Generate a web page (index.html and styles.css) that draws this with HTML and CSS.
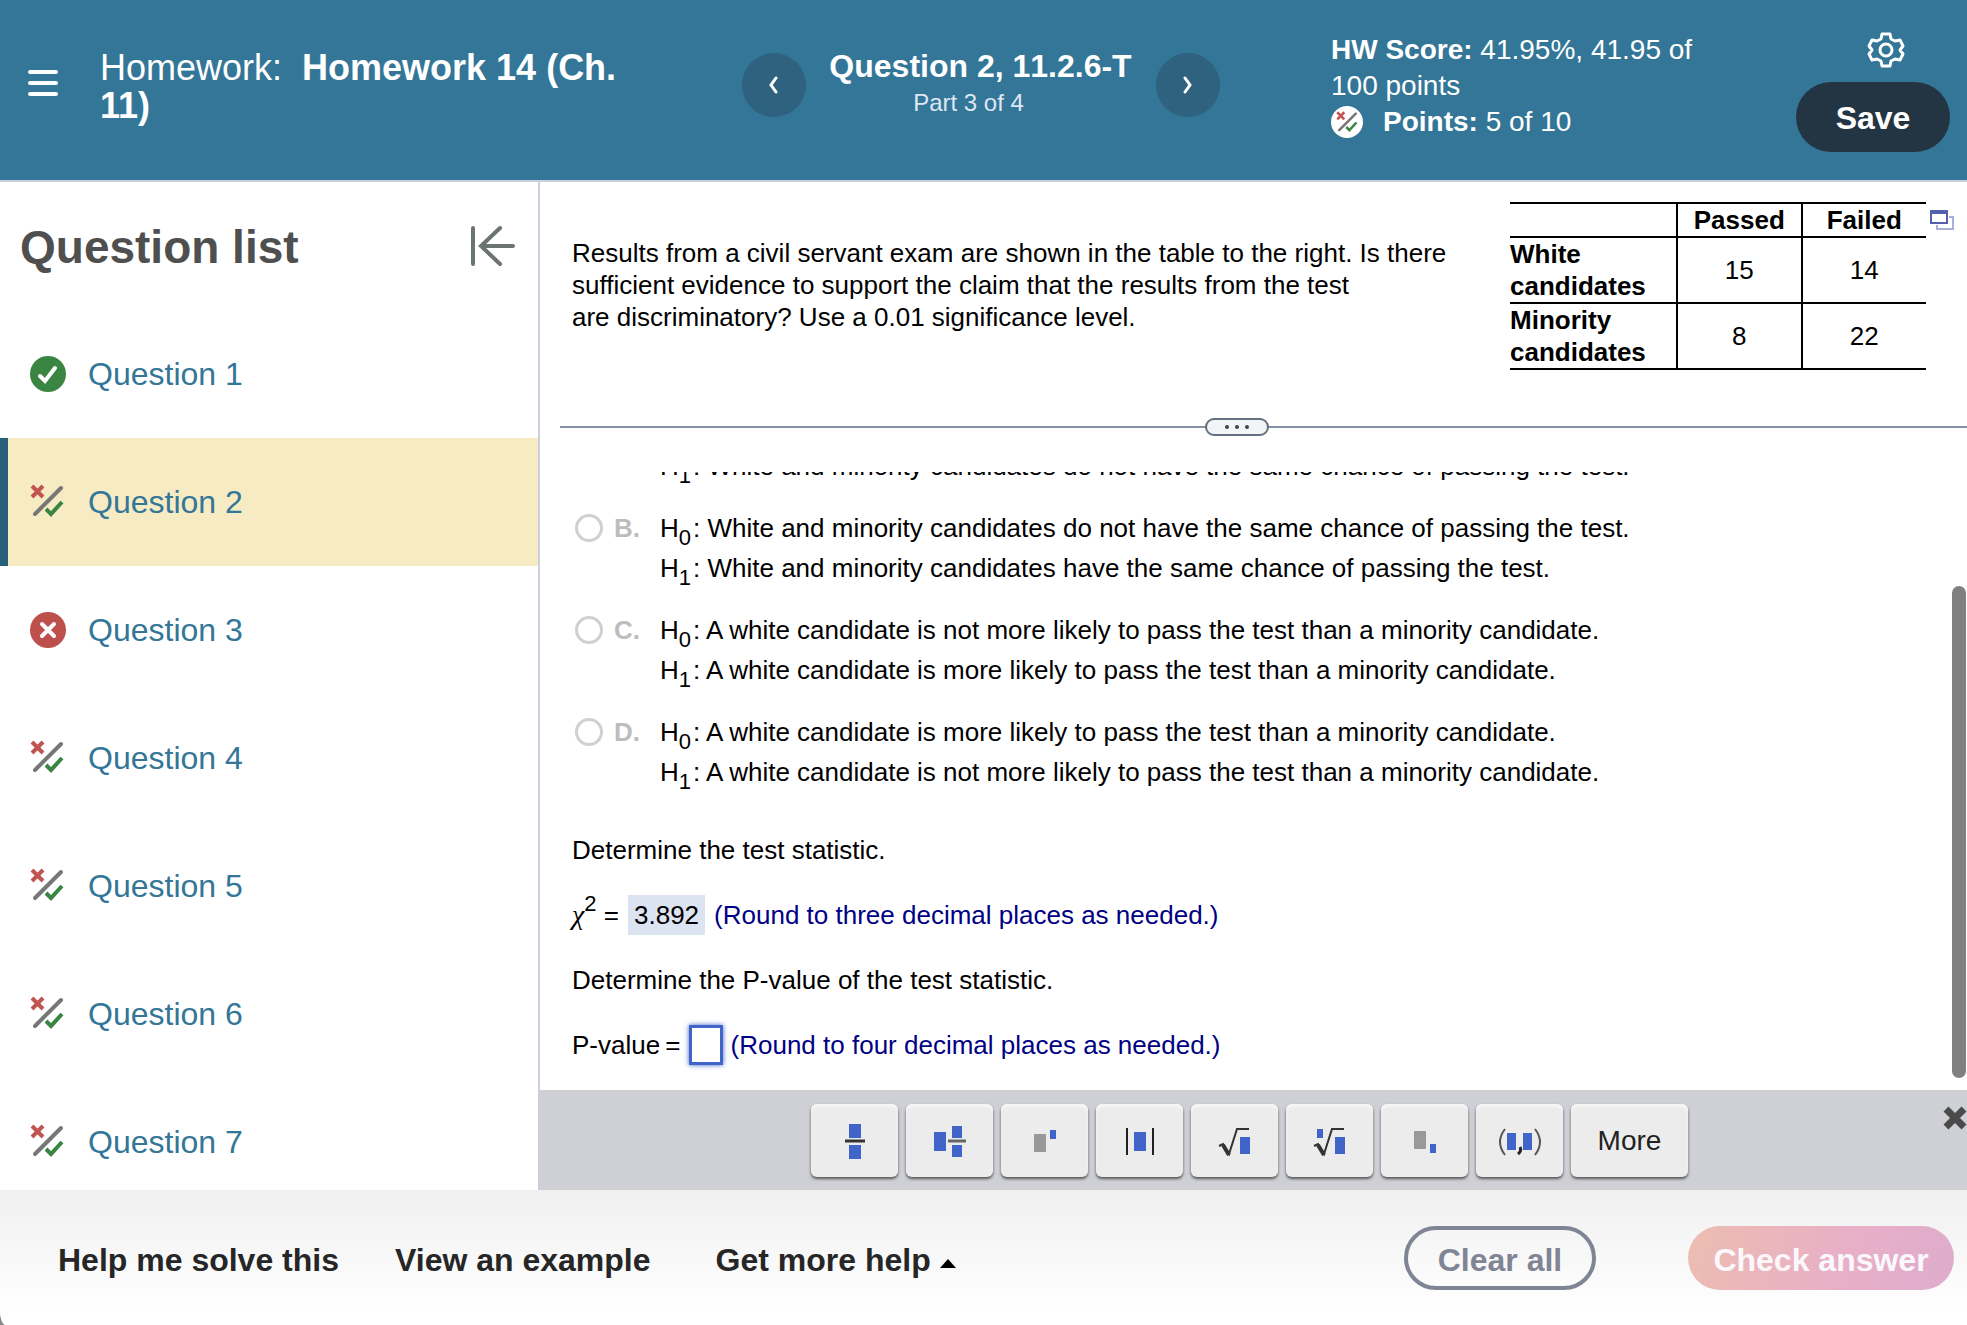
FILE: index.html
```html
<!DOCTYPE html>
<html lang="en">
<head>
<meta charset="utf-8">
<title>Homework 14 (Ch. 11) - Question 2</title>
<link rel="stylesheet" href="styles.css">
</head>
<body>
<svg class="defs" width="0" height="0" aria-hidden="true">
  <symbol id="partial" viewBox="0 0 36 36">
    <path d="M2 2l11 11M13 2L2 13" stroke="#c25450" stroke-width="4"/>
    <path d="M31 4L5 30" stroke="#777" stroke-width="4" stroke-linecap="round"/>
    <path d="M16 25l5 5L32 18" fill="none" stroke="#3b8542" stroke-width="4"/>
  </symbol>
</svg>
<div class="app">
  <header class="topbar">
    <button class="menu" aria-label="Menu"><svg width="30" height="28" viewBox="0 0 30 28"><path d="M2 3h26M2 14h26M2 25h26" stroke="#fff" stroke-width="4" stroke-linecap="round"/></svg></button>
    <h1 class="title"><span class="kind">Homework:&nbsp; </span>Homework 14 (Ch. 11)</h1>
    <nav class="pager" aria-label="Question navigation">
      <button class="round" aria-label="Previous question"><svg width="12" height="18" viewBox="0 0 12 18"><path d="M8 2L3 9l5 7" fill="none" stroke="#fff" stroke-width="3" stroke-linecap="round"/></svg></button>
      <div class="current">
        <h2 class="qname">Question 2, 11.2.6-T</h2>
        <p class="part">Part 3 of 4</p>
      </div>
      <button class="round" aria-label="Next question"><svg width="12" height="18" viewBox="0 0 12 18"><path d="M3 2l5 7-5 7" fill="none" stroke="#fff" stroke-width="3" stroke-linecap="round"/></svg></button>
    </nav>
    <div class="score">
      <p><b>HW Score:</b> 41.95%, 41.95 of 100 points</p>
      <p class="points"><span class="badge"><svg width="23" height="23"><use href="#partial"/></svg></span><span><b>Points:</b> 5 of 10</span></p>
    </div>
    <div class="actions">
      <button class="gear" aria-label="Settings"><svg width="38" height="38" viewBox="0 0 38 38" fill="none" stroke="#fff" stroke-width="3" stroke-linejoin="round"><path d="M15 3h8l1 5 4 2 5-1 3 6-3 4 3 4-3 6-5-1-4 2-1 5h-8l-1-5-4-2-5 1-3-6 3-4-3-4 3-6 5 1 4-2z"/><circle cx="19" cy="19" r="6"/></svg></button>
      <button class="save">Save</button>
    </div>
  </header>

  <div class="body">
    <aside class="sidebar">
      <div class="side-head">
        <h2>Question list</h2>
        <button class="collapse" aria-label="Collapse list"><svg width="46" height="42" viewBox="0 0 46 42" fill="none" stroke="#6c7373" stroke-width="4" stroke-linecap="round"><path d="M3 3v36M43 21H11M30 3L11 21l19 18"/></svg></button>
      </div>
      <ul class="questions">
        <li><a href="#q1"><svg class="mark" viewBox="0 0 36 36"><circle cx="18" cy="18" r="18" fill="#3b8542"/><path d="M10 20l5 5L25 12" fill="none" stroke="#fff" stroke-width="4" stroke-linecap="round"/></svg>Question 1</a></li>
        <li class="active"><a href="#q2"><svg class="mark"><use href="#partial"/></svg>Question 2</a></li>
        <li><a href="#q3"><svg class="mark" viewBox="0 0 36 36"><circle cx="18" cy="18" r="18" fill="#bd504c"/><path d="M12 12l12 12M24 12L12 24" stroke="#fff" stroke-width="4" stroke-linecap="round"/></svg>Question 3</a></li>
        <li><a href="#q4"><svg class="mark"><use href="#partial"/></svg>Question 4</a></li>
        <li><a href="#q5"><svg class="mark"><use href="#partial"/></svg>Question 5</a></li>
        <li><a href="#q6"><svg class="mark"><use href="#partial"/></svg>Question 6</a></li>
        <li><a href="#q7"><svg class="mark"><use href="#partial"/></svg>Question 7</a></li>
      </ul>
    </aside>

    <main class="main">
      <section class="prompt">
        <p class="stem">Results from a civil servant exam are shown in the table to the right. Is there<br>sufficient evidence to support the claim that the results from the test<br>are discriminatory? Use a 0.01 significance level.</p>
        <table class="data">
          <thead><tr><td></td><th scope="col">Passed</th><th scope="col">Failed</th></tr></thead>
          <tbody>
            <tr><th scope="row">White<br>candidates</th><td>15</td><td>14</td></tr>
            <tr><th scope="row">Minority<br>candidates</th><td>8</td><td>22</td></tr>
          </tbody>
        </table>
        <button class="popout" aria-label="Open table in new window"><svg width="24" height="20" viewBox="0 0 24 20" fill="none" stroke-width="2"><path d="M7 15v4h16V7h-4" stroke="#a9b0d8"/><path d="M1 1h16v12H1zM1 3h16" stroke="#5360ab"/></svg></button>
      </section>

      <div class="divider"><button class="handle" aria-label="Resize panes"><i></i><i></i><i></i></button></div>

      <section class="work">
        <div class="scroll">
          <div class="option first"><div class="hyp"><p>H<sub>1</sub>: White and minority candidates do not have the same chance of passing the test.</p></div></div>
          <div class="option">
            <input type="radio" name="hyp" id="ob" disabled><label for="ob">B.</label>
            <div class="hyp"><p>H<sub>0</sub>: White and minority candidates do not have the same chance of passing the test.</p><p>H<sub>1</sub>: White and minority candidates have the same chance of passing the test.</p></div>
          </div>
          <div class="option">
            <input type="radio" name="hyp" id="oc" disabled><label for="oc">C.</label>
            <div class="hyp"><p>H<sub>0</sub>: A white candidate is not more likely to pass the test than a minority candidate.</p><p>H<sub>1</sub>: A white candidate is more likely to pass the test than a minority candidate.</p></div>
          </div>
          <div class="option">
            <input type="radio" name="hyp" id="od" disabled><label for="od">D.</label>
            <div class="hyp"><p>H<sub>0</sub>: A white candidate is more likely to pass the test than a minority candidate.</p><p>H<sub>1</sub>: A white candidate is not more likely to pass the test than a minority candidate.</p></div>
          </div>
          <div class="steps">
            <p>Determine the test statistic.</p>
            <p class="answer"><span><span class="chi">χ</span><sup>2</sup> =</span><span class="given">3.892</span><span class="hint">(Round to three decimal places as needed.)</span></p>
            <p>Determine the P-value of the test statistic.</p>
            <p class="answer entry"><label for="pv">P-value&#8201;=</label><input type="text" id="pv"><span class="hint">(Round to four decimal places as needed.)</span></p>
          </div>
        </div>
        <div class="thumb"></div>
      </section>

      <div class="palette">
        <div class="keys">
          <button class="key" aria-label="Fraction"><svg width="40" height="40" viewBox="0 0 40 40"><path d="M14 3h12v14H14zM14 24h12v14H14z" fill="#4064c8"/><path d="M10 20h20" stroke="#333" stroke-width="3"/></svg></button>
          <button class="key" aria-label="Mixed number"><svg width="40" height="40" viewBox="0 0 40 40"><path d="M4 11h12v19H4zM22 5h10v12H22zM22 24h10v12H22z" fill="#4064c8"/><path d="M18 20h18" stroke="#666" stroke-width="3"/></svg></button>
          <button class="key" aria-label="Exponent"><svg width="40" height="40" viewBox="0 0 40 40"><path d="M9 13h12v18H9z" fill="#999"/><path d="M25 9h6v9h-6z" fill="#4064c8"/></svg></button>
          <button class="key" aria-label="Absolute value"><svg width="40" height="40" viewBox="0 0 40 40"><path d="M14 11h12v19H14z" fill="#4064c8"/><path d="M7 7v27M33 7v27" stroke="#222" stroke-width="2"/></svg></button>
          <button class="key" aria-label="Square root"><svg width="40" height="40" viewBox="0 0 40 40"><path d="M25 16h10v17H25z" fill="#4064c8"/><path d="M4 25l4-2 6 10 8-25h12" fill="none" stroke="#333" stroke-width="2"/><path d="M8 24l6 10" stroke="#333" stroke-width="4"/></svg></button>
          <button class="key" aria-label="Nth root"><svg width="40" height="40" viewBox="0 0 40 40"><path d="M25 16h10v17H25zM7 8h6v9H7z" fill="#4064c8"/><path d="M4 25l4-2 6 10 8-25h12" fill="none" stroke="#333" stroke-width="2"/><path d="M8 24l6 10" stroke="#333" stroke-width="4"/></svg></button>
          <button class="key" aria-label="Subscript"><svg width="40" height="40" viewBox="0 0 40 40"><path d="M9 10h12v18H9z" fill="#999"/><path d="M25 23h6v9h-6z" fill="#4064c8"/></svg></button>
          <button class="key" aria-label="Ordered pair"><svg width="46" height="40" viewBox="0 0 46 40"><path d="M10 12h9v17h-9zM26 12h9v17h-9z" fill="#4064c8"/><path d="M8 8q-10 13 0 26M38 8q10 13 0 26" fill="none" stroke="#555" stroke-width="2"/><path d="M23 26q2 4-2 7" fill="none" stroke="#222" stroke-width="3"/></svg></button>
          <button class="key more">More</button>
        </div>
        <button class="close" aria-label="Close palette"><svg width="24" height="24" viewBox="0 0 24 24"><path d="M3 3l18 18M21 3L3 21" stroke="#4a4a4a" stroke-width="7"/></svg></button>
      </div>
    </main>
  </div>

  <footer class="footer">
    <div class="help">
      <button>Help me solve this</button>
      <button>View an example</button>
      <button class="drop">Get more help <svg width="16" height="9" viewBox="0 0 16 9"><path d="M0 9l8-9 8 9z" fill="#000"/></svg></button>
    </div>
    <button class="clear">Clear all</button>
    <button class="check">Check answer</button>
  </footer>
</div>
</body>
</html>
```
FILE: styles.css
```css
* { box-sizing: border-box; }
html, body { height: 100%; }
body {
  margin: 0;
  background: #888;
  color: #000;
  font-family: "Liberation Sans", Arial, Helvetica, sans-serif;
  font-size: 26px;
  line-height: 32px;
}
h1, h2, p, ul { margin: 0; padding: 0; }
button { font-family: inherit; padding: 0; border: 0; background: none; cursor: pointer; }
svg { display: block; }
.defs { position: absolute; }

.app { display: grid; grid-template-rows: auto 1fr auto; height: 100vh; overflow: hidden; background: #fff; border-bottom-left-radius: 6px 14px; }

/* Top bar */
.topbar {
  display: grid;
  grid-template-columns: 30px 572px minmax(0, 1fr) 465px 154px;
  align-items: start;
  height: 182px;
  padding: 0 17px 0 28px;
  background: #337697;
  border-bottom: 2px solid #ccd0de;
  color: #fff;
}
.menu { margin-top: 69px; }
.title { margin: 49px 0 0 42px; font-size: 36px; line-height: 38px; }
.kind { font-weight: 400; }
.pager { display: flex; align-items: center; justify-content: center; gap: 20px; margin-top: 48px; }
.round { display: grid; place-items: center; flex: none; width: 64px; height: 64px; border-radius: 50%; background: #2e627e; }
.current { width: 310px; text-align: center; white-space: nowrap; }
.qname { font-size: 32px; line-height: 36px; font-kerning: none; }
.part { padding: 1px 24px 0 0; font-size: 24px; line-height: 36px; color: #dfe6f4; }
.score { margin-top: 32px; padding-right: 60px; font-size: 28px; line-height: 36px; }
.points { display: flex; align-items: center; gap: 20px; }
.badge { display: grid; place-items: center; width: 32px; height: 32px; border-radius: 50%; background: #fff; }
.actions { display: grid; justify-items: center; gap: 13px; margin-top: 31px; }
.gear { margin-left: 26px; }
.save { width: 154px; height: 70px; padding-top: 3px; border-radius: 35px; background: #233443; color: #fff; font-size: 32px; font-weight: 700; }

/* Sidebar */
.body { display: grid; grid-template-columns: 540px minmax(0, 1fr); min-height: 0; }
.sidebar { min-height: 0; overflow: hidden; border-right: 2px solid #ccd0de; }
.side-head { display: flex; align-items: center; justify-content: space-between; height: 128px; padding: 0 22px 0 20px; color: #4f4f4f; }
.side-head h2 { padding-top: 2px; font-size: 46px; line-height: 56px; }
.questions { list-style: none; }
.questions a { display: flex; align-items: center; height: 128px; padding-left: 30px; gap: 22px; color: #337697; font-size: 32px; text-decoration: none; }
.mark { width: 36px; height: 36px; }
.active { background: #f7ebc3; box-shadow: inset 8px 0 #285f7b; }

/* Question */
.main { display: grid; grid-template-rows: auto auto minmax(0, 1fr) auto; min-height: 0; }
.prompt { display: flex; align-items: flex-start; height: 236px; padding: 20px 13px 0 32px; }
.stem { flex: 1; margin-top: 35px; white-space: nowrap; }
.data { width: 416px; border-collapse: collapse; table-layout: fixed; }
.data tr { border-top: 2px solid #000; border-bottom: 2px solid #000; }
.data th, .data td { padding: 0; text-align: center; }
.data th:first-child { text-align: left; }
.data td:first-child { width: 167px; }
.data tr > * + * { border-left: 2px solid #000; }
.popout { margin: 8px 0 0 4px; }

.divider { display: flex; align-items: center; justify-content: center; height: 18px; margin-left: 20px; padding-right: 54px; background: linear-gradient(#8490a4, #8490a4) center / 100% 2px no-repeat; }
.handle { display: flex; align-items: center; justify-content: center; gap: 6px; width: 64px; height: 18px; border: 2px solid #62707f; border-radius: 9px; background: #f2f4f7; }
.handle i { width: 4px; height: 4px; border-radius: 50%; background: #444; }

.work { position: relative; display: grid; min-height: 0; margin-top: 36px; }
.scroll { display: flex; flex-direction: column; justify-content: flex-end; overflow: hidden; padding: 0 32px 25px; }
.option { display: flex; align-items: flex-start; margin-bottom: 22px; }
.option input { appearance: none; flex: none; width: 28px; height: 28px; margin: 6px 11px 0 3px; border: 3px solid #d0d0d0; border-radius: 50%; background: #fff; }
.option label { flex: none; width: 46px; line-height: 40px; font-weight: 700; color: #bdbdbd; }
.option.first { padding-left: 88px; }
.hyp p { line-height: 40px; white-space: nowrap; }
sub, sup { font-size: 22px; line-height: 0; }
sub { margin-right: 2px; vertical-align: -8px; }
sup { vertical-align: 13px; }
.steps { display: grid; gap: 29px; margin-top: 20px; }
.answer { display: flex; align-items: center; gap: 9px; height: 40px; }
.chi { font-family: "Liberation Serif", "Times New Roman", serif; font-style: italic; font-size: 28px; }
.given { padding: 4px 6px; background: #dce3f1; }
.hint { color: #000084; white-space: nowrap; }
.entry { gap: 8px; }
.entry input { width: 34px; height: 40px; margin: 0; padding: 0; border: 3px solid #4064c8; box-shadow: 0 0 5px #4064c8; outline: 0; font: inherit; }
.thumb { position: absolute; top: 114px; right: 1px; bottom: 12px; width: 14px; border-radius: 7px; background: #808080; }

/* Math palette */
.palette { position: relative; display: flex; justify-content: center; padding: 14px 8px 13px 0; background: #cfd0d6; }
.keys { display: flex; gap: 8px; }
.key { display: grid; place-items: center; width: 87px; height: 73px; border-radius: 6px; background: #ececec; box-shadow: inset 0 3px 2px #f6f6f6, 0 2px 3px #555; color: #222; font-size: 28px; }
.more { width: 117px; }
.close { position: absolute; top: 16px; right: 0; }

/* Footer */
.footer { display: flex; align-items: flex-start; height: 135px; padding: 36px 13px 0 58px; background: linear-gradient(#f0f0f0, #fff 90%); }
.footer button { height: 64px; padding-top: 4px; font-size: 32px; font-weight: 700; color: #262626; white-space: nowrap; }
.help { display: flex; flex: 1; gap: 56px; }
.help .drop { margin-left: 9px; }
.help svg { display: inline-block; vertical-align: 3px; }
.footer .clear { width: 192px; margin-right: 92px; border: 4px solid #7f8594; border-radius: 32px; color: #7f8594; }
.footer .check { width: 266px; border-radius: 32px; background: linear-gradient(110deg, #edbdb0, #e8afc8 60%, #deaccd); color: #fbf8fc; }
```
